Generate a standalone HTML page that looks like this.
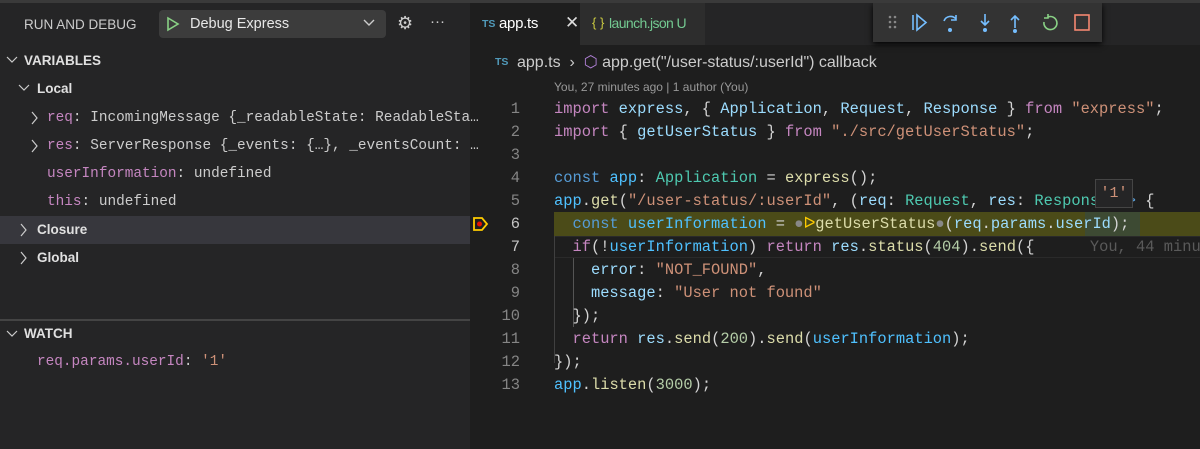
<!DOCTYPE html>
<html><head><meta charset="utf-8"><style>
*{margin:0;padding:0;box-sizing:border-box}
body{width:1200px;height:449px;overflow:hidden;background:#1e1e1e;font-family:"Liberation Sans",sans-serif;position:relative;color:#ccc}
.a{position:absolute;white-space:pre}
#side{position:absolute;left:0;top:0;width:470px;height:449px;background:#252526}
.m{font-family:"Liberation Mono",monospace}
.sv{font-size:14.4px;line-height:28px}
.code{font-family:"Liberation Mono",monospace;font-size:15.4px;line-height:23px;color:#d4d4d4}
.k{color:#c586c0}.b{color:#569cd6}.v{color:#9cdcfe}.t{color:#4ec9b0}.f{color:#dcdcaa}.s{color:#ce9178}.n{color:#b5cea8}.vv{color:#4fc1ff}
.ln{position:absolute;width:50px;left:470px;text-align:right;color:#858585;font-family:"Liberation Mono",monospace;font-size:15.4px;line-height:23px}
.h{font-weight:bold;font-size:13.5px;color:#e0e0e0}
</style></head><body>
<div style="position:absolute;left:0;top:0;width:1200px;height:3px;background:#3a3a3a;z-index:5"></div>
<div id="side">
 <div class="a" style="left:24px;top:17px;font-size:13.5px;color:#ccc">RUN AND DEBUG</div>
 <div style="position:absolute;left:159px;top:10px;width:227px;height:28px;background:#3c3c3c;border-radius:4px"></div>
 <svg class="a" style="left:166px;top:16px" width="14" height="16"><path d="M2 2 L12 8 L2 14 Z" fill="none" stroke="#89d185" stroke-width="1.6"/></svg>
 <div class="a" style="left:190px;top:16px;font-size:14.5px;color:#e8e8e8">Debug Express</div>
 <svg class="a" style="left:362px;top:17px" width="14" height="12"><path d="M2 3 L7 8 L12 3" fill="none" stroke="#ccc" stroke-width="1.4"/></svg>
 <div class="a" style="left:397px;top:13px;font-size:18px;color:#ccc">⚙</div>
 <div class="a" style="left:430px;top:13px;font-size:15px;color:#ccc">···</div>
 <svg class="a" style="left:6px;top:55px" width="12" height="10"><path d="M1 2 L6 7 L11 2" fill="none" stroke="#ccc" stroke-width="1.2"/></svg>
 <div class="a h" style="left:24px;top:53px">VARIABLES</div>
 <svg class="a" style="left:18px;top:83px" width="12" height="10"><path d="M1 2 L6 7 L11 2" fill="none" stroke="#ccc" stroke-width="1.2"/></svg>
 <div class="a h" style="left:37px;top:81px">Local</div>
 <svg class="a" style="left:30px;top:111px" width="10" height="14"><path d="M2 1 L7 7 L2 13" fill="none" stroke="#ccc" stroke-width="1.2"/></svg>
 <div class="a m sv" style="left:47px;top:104px"><span class="k">req</span>: IncomingMessage {_readableState: ReadableSta…</div>
 <svg class="a" style="left:30px;top:139px" width="10" height="14"><path d="M2 1 L7 7 L2 13" fill="none" stroke="#ccc" stroke-width="1.2"/></svg>
 <div class="a m sv" style="left:47px;top:132px"><span class="k">res</span>: ServerResponse {_events: {…}, _eventsCount: …</div>
 <div class="a m sv" style="left:47px;top:160px"><span class="k">userInformation</span>: undefined</div>
 <div class="a m sv" style="left:47px;top:188px"><span class="k">this</span>: undefined</div>
 <div style="position:absolute;left:0;top:216px;width:470px;height:28px;background:#37373d"></div>
 <svg class="a" style="left:19px;top:223px" width="10" height="14"><path d="M2 1 L7 7 L2 13" fill="none" stroke="#ccc" stroke-width="1.2"/></svg>
 <div class="a h" style="left:37px;top:222px">Closure</div>
 <svg class="a" style="left:19px;top:251px" width="10" height="14"><path d="M2 1 L7 7 L2 13" fill="none" stroke="#ccc" stroke-width="1.2"/></svg>
 <div class="a h" style="left:37px;top:250px">Global</div>
 <div style="position:absolute;left:0;top:319px;width:470px;height:2px;background:#444"></div>
 <svg class="a" style="left:6px;top:329px" width="12" height="10"><path d="M1 2 L6 7 L11 2" fill="none" stroke="#ccc" stroke-width="1.2"/></svg>
 <div class="a h" style="left:24px;top:326px">WATCH</div>
 <div class="a m sv" style="left:37px;top:348px"><span class="k">req.params.userId</span>: <span class="s">'1'</span></div>
</div>
<!-- tabs -->
<div style="position:absolute;left:470px;top:0;width:730px;height:45px;background:#252526"></div>
<div style="position:absolute;left:470px;top:3px;width:110px;height:42px;background:#1e1e1e"></div>
<div style="position:absolute;left:580px;top:3px;width:125px;height:42px;background:#2d2d2d"></div>
<div class="a" style="left:482px;top:18px;font-size:10.5px;font-weight:bold;color:#519aba">TS</div>
<div class="a" style="left:499px;top:15px;font-size:15px;color:#fff;letter-spacing:-0.3px">app.ts</div>
<div class="a" style="left:565px;top:13px;font-size:17px;color:#ddd">✕</div>
<div class="a" style="left:592px;top:15px;font-size:13px;color:#cbcb41">{ }</div>
<div class="a" style="left:609px;top:15px;font-size:14px;color:#73c991;letter-spacing:-0.6px">launch.json U</div>
<!-- debug toolbar -->
<div style="position:absolute;left:873px;top:3px;width:229px;height:39px;background:#333;box-shadow:0 2px 6px #000"></div>
<svg class="a" style="left:885px;top:12px" width="215" height="22">
 <g fill="#888"><circle cx="5" cy="5" r="1.3"/><circle cx="10" cy="5" r="1.3"/><circle cx="5" cy="10" r="1.3"/><circle cx="10" cy="10" r="1.3"/><circle cx="5" cy="15" r="1.3"/><circle cx="10" cy="15" r="1.3"/></g>
 <g stroke="#75beff" stroke-width="1.6" fill="none"><path d="M28 3 V18"/><path d="M32 3 L41 10.5 L32 18 Z"/><path d="M59 9 A7 7 0 0 1 71 7 M71 3 V8 H66"/><path d="M100 2 V13 M96 9 L100 13 L104 9"/><path d="M130 16 V4 M126 8 L130 4 L134 8"/></g>
 <g fill="#75beff"><circle cx="65" cy="18" r="2"/><circle cx="100" cy="18" r="2"/><circle cx="130" cy="19" r="2"/></g>
 <path d="M163 5 A6.5 6.5 0 1 1 159 10 M163 2 V6 H159" stroke="#89d185" stroke-width="1.6" fill="none"/>
 <rect x="190" y="3" width="14" height="15" stroke="#f48771" stroke-width="1.6" fill="none"/>
</svg>
<!-- breadcrumb -->
<div class="a" style="left:495px;top:56px;font-size:10.5px;font-weight:bold;color:#519aba">TS</div>
<div class="a" style="left:517px;top:52px;font-size:16px;color:#ccc">app.ts  ›  <span style="color:#b180d7">⬡</span> app.get("/user-status/:userId") callback</div>
<div class="a" style="left:554px;top:80px;font-size:12px;color:#999">You, 27 minutes ago | 1 author (You)</div>
<!-- highlight -->
<div style="position:absolute;left:554px;top:212px;width:646px;height:24px;background:#4b4b18"></div>
<div style="position:absolute;left:1085px;top:212px;width:55px;height:24px;background:#3d4a33"></div>
<div style="position:absolute;left:554px;top:236px;width:646px;height:22px;border-top:1px solid #2a2a2a;border-bottom:1px solid #2a2a2a"></div>
<div style="position:absolute;left:554px;top:236px;width:1px;height:127px;background:#404040"></div>
<div style="position:absolute;left:573px;top:258px;width:1px;height:69px;background:#555"></div>
<svg class="a" style="left:472px;top:215px" width="18" height="18"><path d="M2 3 H10 L15 9 L10 15 H2 Z" fill="none" stroke="#ffcc00" stroke-width="1.8"/><circle cx="7.5" cy="9" r="2.5" fill="#e51400"/></svg>
<!-- line numbers -->
<div class="ln" style="top:98px">1<br>2<br>3<br>4<br>5<br><span style="color:#c6c6c6">6</span><br><span style="color:#c6c6c6">7</span><br>8<br>9<br>10<br>11<br>12<br>13</div>
<div class="a code" style="left:554px;top:98px"><span class="k">import</span> <span class="v">express</span>, { <span class="v">Application</span>, <span class="v">Request</span>, <span class="v">Response</span> } <span class="k">from</span> <span class="s">"express"</span>;
<span class="k">import</span> { <span class="v">getUserStatus</span> } <span class="k">from</span> <span class="s">"./src/getUserStatus"</span>;

<span class="b">const</span> <span class="vv">app</span>: <span class="t">Application</span> = <span class="f">express</span>();
<span class="vv">app</span>.<span class="f">get</span>(<span class="s">"/user-status/:userId"</span>, (<span class="v">req</span>: <span class="t">Request</span>, <span class="v">res</span>: <span class="t">Respons</span>   <span class="b">&gt;</span> {
  <span class="b">const</span> <span class="vv">userInformation</span> = <span style="color:#888">●</span><span style="color:#ffcc00">ᐅ</span><span class="f">getUserStatus</span><span style="color:#888">●</span>(<span class="v">req</span>.<span class="v">params</span>.<span class="v">userId</span>);
  <span class="k">if</span>(!<span class="vv">userInformation</span>) <span class="k">return</span> <span class="v">res</span>.<span class="f">status</span>(<span class="n">404</span>).<span class="f">send</span>({      <span style="color:#5a5a5a">You, 44 minu</span>
    <span class="v">error</span>: <span class="s">"NOT_FOUND"</span>,
    <span class="v">message</span>: <span class="s">"User not found"</span>
  });
  <span class="k">return</span> <span class="v">res</span>.<span class="f">send</span>(<span class="n">200</span>).<span class="f">send</span>(<span class="vv">userInformation</span>);
});
<span class="vv">app</span>.<span class="f">listen</span>(<span class="n">3000</span>);</div>
<div class="a" style="left:1095px;top:179px;width:38px;height:29px;background:#252526;border:1px solid #454545;color:#ce9178;font-family:'Liberation Mono',monospace;font-size:15px;line-height:27px;text-align:center">'1'</div>
</body></html>
